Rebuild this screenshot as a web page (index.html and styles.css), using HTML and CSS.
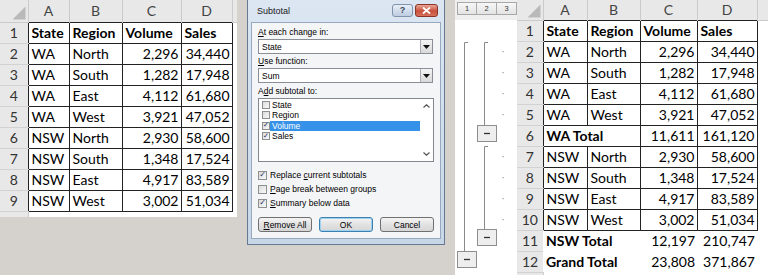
FILE: index.html
```html
<!DOCTYPE html>
<html>
<head>
<meta charset="utf-8">
<link rel="stylesheet" href="styles.css">
</head>
<body>
<div class="screen">
  <div class="sheet-left">
    <table class="grid gl">
      <colgroup><col class="w28"><col class="w41"><col class="w53"><col class="w59"><col class="w51"><col class="w5"></colgroup>
      <tr class="hrow"><th class="corner"><span class="tri"></span></th><th class="hd">A</th><th class="hd">B</th><th class="hd">C</th><th class="hd">D</th><th class="hd end"></th></tr>
      <tr><td class="rh">1</td><td class="c b">State</td><td class="c b">Region</td><td class="c b">Volume</td><td class="c b">Sales</td><td></td></tr>
      <tr><td class="rh">2</td><td class="c">WA</td><td class="c">North</td><td class="c n">2,296</td><td class="c n">34,440</td><td></td></tr>
      <tr><td class="rh">3</td><td class="c">WA</td><td class="c">South</td><td class="c n">1,282</td><td class="c n">17,948</td><td></td></tr>
      <tr><td class="rh">4</td><td class="c">WA</td><td class="c">East</td><td class="c n">4,112</td><td class="c n">61,680</td><td></td></tr>
      <tr><td class="rh">5</td><td class="c">WA</td><td class="c">West</td><td class="c n">3,921</td><td class="c n">47,052</td><td></td></tr>
      <tr><td class="rh">6</td><td class="c">NSW</td><td class="c">North</td><td class="c n">2,930</td><td class="c n">58,600</td><td></td></tr>
      <tr><td class="rh">7</td><td class="c">NSW</td><td class="c">South</td><td class="c n">1,348</td><td class="c n">17,524</td><td></td></tr>
      <tr><td class="rh">8</td><td class="c">NSW</td><td class="c">East</td><td class="c n">4,917</td><td class="c n">83,589</td><td></td></tr>
      <tr><td class="rh">9</td><td class="c">NSW</td><td class="c">West</td><td class="c n">3,002</td><td class="c n">51,034</td><td></td></tr>
      <tr class="part"><td class="rh"></td><td></td><td></td><td></td><td></td><td></td></tr>
    </table>
  </div>

  <div class="dialog">
    <div class="titlebar">
      <span class="title">Subtotal</span>
      <div class="tbtns">
        <span class="tb help">?</span>
        <span class="tb close"><svg width="9" height="7" viewBox="0 0 9 7"><path d="M1 0.5 L8 6.5 M8 0.5 L1 6.5" stroke="#fff" stroke-width="1.8"/></svg></span>
      </div>
    </div>
    <div class="client">
      <div class="label"><u>A</u>t each change in:</div>
      <div class="select"><span class="val">State</span><span class="dd"><svg width="7" height="4" viewBox="0 0 7 4"><path d="M0 0 H7 L3.5 4 Z" fill="#111"/></svg></span></div>
      <div class="label l2"><u>U</u>se function:</div>
      <div class="select"><span class="val">Sum</span><span class="dd"><svg width="7" height="4" viewBox="0 0 7 4"><path d="M0 0 H7 L3.5 4 Z" fill="#111"/></svg></span></div>
      <div class="label l3">A<u>d</u>d subtotal to:</div>
      <div class="listbox">
        <div class="items">
          <div class="item"><span class="cb sm"></span><span class="txt">State</span></div>
          <div class="item"><span class="cb sm"></span><span class="txt">Region</span></div>
          <div class="item"><span class="cb sm on">✓</span><span class="txt sel">Volume</span></div>
          <div class="item"><span class="cb sm on">✓</span><span class="txt">Sales</span></div>
        </div>
        <div class="scroll">
          <svg width="7" height="4" viewBox="0 0 7 4"><path d="M0.5 3.5 L3.5 0.8 L6.5 3.5" fill="none" stroke="#555" stroke-width="1.2"/></svg>
          <svg width="7" height="4" viewBox="0 0 7 4"><path d="M0.5 0.5 L3.5 3.2 L6.5 0.5" fill="none" stroke="#555" stroke-width="1.2"/></svg>
        </div>
      </div>
      <div class="opts">
        <div class="opt"><span class="cb on">✓</span><span>Replace <u>c</u>urrent subtotals</span></div>
        <div class="opt"><span class="cb"></span><span><u>P</u>age break between groups</span></div>
        <div class="opt"><span class="cb on">✓</span><span><u>S</u>ummary below data</span></div>
      </div>
      <div class="buttons">
        <span class="btn"><u>R</u>emove All</span>
        <span class="btn def">OK</span>
        <span class="btn">Cancel</span>
      </div>
    </div>
  </div>

  <div class="rightpane">
    <div class="outline">
      <div class="levels"><span class="lv">1</span><span class="lv">2</span><span class="lv">3</span></div>
      <svg class="brackets" width="62" height="255" viewBox="0 0 62 255">
        <g stroke="#8a8a8a" stroke-width="1" fill="none">
          <path d="M13 22.5 H9.5 V232"/>
          <path d="M33 22.5 H29.5 V106"/>
          <path d="M33 126.5 H29.5 V210"/>
        </g>
        <g fill="#9a9a9a">
          <rect x="47.5" y="31" width="1.2" height="1.2"/>
          <rect x="47.5" y="52" width="1.2" height="1.2"/>
          <rect x="47.5" y="73" width="1.2" height="1.2"/>
          <rect x="47.5" y="94" width="1.2" height="1.2"/>
          <rect x="47.5" y="136" width="1.2" height="1.2"/>
          <rect x="47.5" y="157" width="1.2" height="1.2"/>
          <rect x="47.5" y="178" width="1.2" height="1.2"/>
          <rect x="47.5" y="199" width="1.2" height="1.2"/>
        </g>
        <g>
          <rect x="22.5" y="105.5" width="19" height="16" fill="#eeeeee" stroke="#8e8e8e"/>
          <path d="M29 113.5 H35" stroke="#333" stroke-width="1.3"/>
          <rect x="22.5" y="209.5" width="19" height="16" fill="#eeeeee" stroke="#8e8e8e"/>
          <path d="M29 217.5 H35" stroke="#333" stroke-width="1.3"/>
          <rect x="2.5" y="231.5" width="19" height="16" fill="#eeeeee" stroke="#8e8e8e"/>
          <path d="M9 239.5 H15" stroke="#333" stroke-width="1.3"/>
        </g>
      </svg>
    </div>
    <table class="grid gr">
      <colgroup><col class="w26"><col class="w44"><col class="w53"><col class="w57"><col class="w60"><col class="w11"></colgroup>
      <tr class="hrow"><th class="corner"><span class="tri"></span></th><th class="hd">A</th><th class="hd">B</th><th class="hd">C</th><th class="hd">D</th><th class="hd end"></th></tr>
      <tr><td class="rh">1</td><td class="c b">State</td><td class="c b">Region</td><td class="c b">Volume</td><td class="c b">Sales</td><td></td></tr>
      <tr><td class="rh">2</td><td class="c">WA</td><td class="c">North</td><td class="c n">2,296</td><td class="c n">34,440</td><td></td></tr>
      <tr><td class="rh">3</td><td class="c">WA</td><td class="c">South</td><td class="c n">1,282</td><td class="c n">17,948</td><td></td></tr>
      <tr><td class="rh">4</td><td class="c">WA</td><td class="c">East</td><td class="c n">4,112</td><td class="c n">61,680</td><td></td></tr>
      <tr><td class="rh">5</td><td class="c">WA</td><td class="c">West</td><td class="c n">3,921</td><td class="c n">47,052</td><td></td></tr>
      <tr><td class="rh">6</td><td class="c b" colspan="2">WA Total</td><td class="c n">11,611</td><td class="c n">161,120</td><td></td></tr>
      <tr><td class="rh">7</td><td class="c">NSW</td><td class="c">North</td><td class="c n">2,930</td><td class="c n">58,600</td><td></td></tr>
      <tr><td class="rh">8</td><td class="c">NSW</td><td class="c">South</td><td class="c n">1,348</td><td class="c n">17,524</td><td></td></tr>
      <tr><td class="rh">9</td><td class="c">NSW</td><td class="c">East</td><td class="c n">4,917</td><td class="c n">83,589</td><td></td></tr>
      <tr><td class="rh">10</td><td class="c">NSW</td><td class="c">West</td><td class="c n">3,002</td><td class="c n">51,034</td><td></td></tr>
      <tr><td class="rh">11</td><td class="p b" colspan="2">NSW Total</td><td class="p n">12,197</td><td class="p n">210,747</td><td></td></tr>
      <tr><td class="rh">12</td><td class="p b" colspan="2">Grand Total</td><td class="p n">23,808</td><td class="p n">371,867</td><td></td></tr>
      <tr class="part"><td class="rh"></td><td></td><td></td><td></td><td></td><td></td></tr>
    </table>
  </div>
</div>
</body>
</html>
```

FILE: styles.css
```css
* { box-sizing: border-box; }
html, body { margin: 0; padding: 0; }
body {
  width: 768px;
  height: 275px;
  overflow: hidden;
  background: #d5d2cd;
}
.screen {
  display: flex;
  align-items: flex-start;
  height: 275px;
}

/* ---------- spreadsheet grids ---------- */
.grid {
  border-collapse: collapse;
  table-layout: fixed;
  font-family: Lato, "Liberation Sans", sans-serif;
  font-size: 14px;
  color: #000;
  background: #fff;
}
.grid td, .grid th { padding: 0; white-space: nowrap; overflow: hidden; }
.w5 { width: 5px; } .w11 { width: 11px; }
.w26 { width: 26px; } .w28 { width: 28px; }
.w41 { width: 41px; } .w44 { width: 44px; }
.w51 { width: 51px; } .w53 { width: 53px; }
.w57 { width: 57px; } .w59 { width: 59px; } .w60 { width: 60px; }

.gl { width: 237px; }
.gl tr { height: 21px; }
.gl tr.hrow { height: 22px; }
.gl tr.part { height: 6px; }
.gr { width: 251px; }
.gr tr { height: 21px; }
.gr tr.hrow { height: 20px; }
.gr tr.part { height: 4px; }

.hd {
  background: #e8e8e8;
  color: #444;
  font-weight: normal;
  text-align: center;
  border-right: 1px solid #cbcbcb;
}
.hd.end { border-right: none; border-bottom: 1px solid #cbcbcb; }
.corner {
  background: #e8e8e8;
  border-right: 1px solid #cbcbcb;
  border-bottom: 1px solid #cbcbcb;
  position: relative;
}
.tri {
  position: absolute;
  right: 2px;
  bottom: 2px;
  width: 13px;
  height: 13px;
  background: #b9b9b9;
  clip-path: polygon(100% 0, 100% 100%, 0 100%);
}
.grid .rh {
  background: #e8e8e8;
  color: #333;
  text-align: center;
  border-bottom: 1px solid #d2d2d2;
}
.grid .part .rh { border-bottom: none; border-right: 1px solid #cbcbcb; }
.grid .c {
  border: 1px solid #222;
  padding: 0 3px;
}
.grid .p { padding: 0 3px; }
.grid .n { text-align: right; padding-right: 2px; }
.b { font-weight: bold; }

/* ---------- dialog ---------- */
.dialog {
  margin-left: 10px;
  width: 198px;
  height: 245px;
  border: 1px solid #65788f;
  border-top: none;
  background: linear-gradient(#dbe6f2, #c8d7e8);
  font-family: "Liberation Sans", Arial, sans-serif;
  font-size: 8.5px;
  color: #000;
  display: flex;
  flex-direction: column;
  padding: 0 3px 5px 3px;
}
.titlebar {
  height: 22px;
  display: flex;
  align-items: center;
  justify-content: space-between;
  padding: 0 3px 1px 6px;
}
.title { font-size: 9px; color: #1a1a1a; }
.tbtns { display: flex; gap: 2px; align-items: center; margin-top: -1px; }
.tb {
  height: 13px;
  border-radius: 3px;
  display: flex;
  align-items: center;
  justify-content: center;
}
.help {
  width: 21px;
  border: 1px solid #8193aa;
  background: linear-gradient(#e7eef7, #bfcde0);
  color: #3b4a5e;
  font-weight: bold;
  font-size: 9px;
}
.close {
  width: 23px;
  border: 1px solid #8a3427;
  background: linear-gradient(#e9a797, #c9503b 55%, #d6705a);
}
.client {
  flex: 1;
  background: #f4f5f7;
  border: 1px solid #98a9bf;
  padding: 3px 6px 0 6px;
  display: flex;
  flex-direction: column;
}
.label { height: 11px; line-height: 11px; margin-top: 1px; }
.label.l2 { margin-top: 2px; }
.label.l3 { margin-top: 3px; }
u { text-decoration-thickness: 1px; text-underline-offset: 1px; }
.select {
  margin-top: 1px;
  height: 15px;
  width: 175px;
  border: 1px solid #8a8f97;
  background: #fff;
  display: flex;
  align-items: center;
  justify-content: space-between;
  padding-left: 3px;
}
.dd {
  width: 12px;
  height: 13px;
  border-left: 1px solid #a9adb3;
  background: linear-gradient(#f4f4f4, #d9d9d9);
  display: flex;
  align-items: center;
  justify-content: center;
}
.listbox {
  margin-top: 1px;
  height: 64px;
  width: 176px;
  border: 1px solid #828790;
  background: #fff;
  display: flex;
}
.items { flex: 1; padding: 1px 0 0 3px; }
.item { height: 10.3px; display: flex; align-items: center; }
.txt { padding-left: 2px; line-height: 10px; height: 10px; flex: 1; }
.txt.sel { background: #3592e8; color: #fff; }
.scroll {
  width: 13px;
  display: flex;
  flex-direction: column;
  justify-content: space-between;
  align-items: center;
  padding: 5px 0 5px;
}
.cb {
  width: 9px;
  height: 9px;
  border: 1px solid #8e8f8f;
  background: linear-gradient(135deg, #dcdcdc, #f8f8f8);
  display: inline-flex;
  align-items: center;
  justify-content: center;
  font-size: 8px;
  font-weight: bold;
  color: #1b2f5c;
  font-family: "DejaVu Sans", sans-serif;
  line-height: 1;
  flex: none;
}
.cb.sm { width: 8px; height: 8px; font-size: 7px; }
.opts { margin-top: 6px; display: flex; flex-direction: column; }
.opt { height: 14px; display: flex; align-items: center; gap: 3px; }
.buttons {
  margin-top: 7px;
  display: flex;
  justify-content: space-between;
  width: 176px;
}
.btn {
  height: 15px;
  border: 1px solid #707070;
  border-radius: 3px;
  background: linear-gradient(#f4f4f4, #e2e2e2 50%, #d6d6d6);
  display: flex;
  align-items: center;
  justify-content: center;
  width: 54px;
}
.btn.def { border-color: #3c7fb1; box-shadow: inset 0 0 0 1px #9ed0f0; }

/* ---------- right pane ---------- */
.rightpane {
  margin-left: 10px;
  display: flex;
  background: #fff;
  height: 275px;
}
.outline { width: 62px; display: flex; flex-direction: column; }
.levels {
  height: 20px;
  background: #efefef;
  display: flex;
  align-items: flex-start;
  padding: 2px 0 0 2px;
}
.lv {
  width: 20px;
  height: 13px;
  border: 1px solid #a8a8a8;
  background: linear-gradient(#f7f7f7, #e3e3e3);
  font-family: "Liberation Sans", sans-serif;
  font-size: 7.5px;
  color: #333;
  display: flex;
  align-items: center;
  justify-content: center;
}
.lv + .lv { border-left: none; }
.brackets { display: block; }
```
